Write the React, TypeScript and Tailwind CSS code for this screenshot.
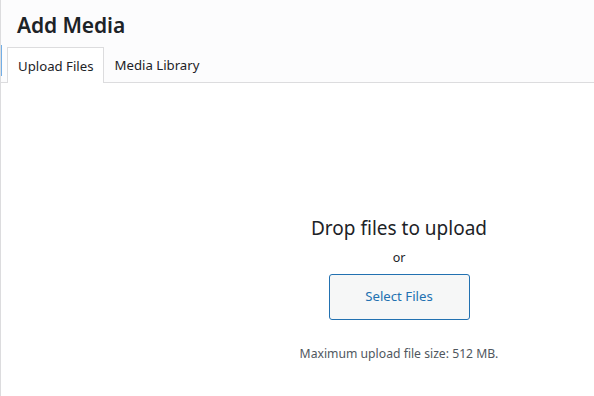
export default function App() {
  return (
    <div
      className="relative w-[594px] h-[396px] overflow-hidden bg-white border-l border-[#dcdcde] text-[#1d2327]"
      style={{ fontFamily: '"Noto Sans", "Open Sans", sans-serif' }}
    >
      <div className="absolute left-[-1px] top-[45px] h-[31px] w-[2px] bg-[#72aee6]" />

      <div className="bg-[#fcfcfd] border-b border-[#dcdcde]">
        <h1 className="px-4 h-[47px] leading-[50px] text-[21px] font-semibold tracking-[-0.1px]">Add Media</h1>
        <div className="flex px-[6px] h-[35px] text-[13.2px]">
          <button className="px-[10px] bg-white border border-b-0 border-[#dcdcde] -mb-px h-[36px] leading-[34px]">
            Upload Files
          </button>
          <button className="px-[10px] h-[35px] leading-[34px]">Media Library</button>
        </div>
      </div>

      <div className="pl-[203px] pt-[131px] flex flex-col items-center text-center">
        <h2 className="text-[19px] leading-[28px] font-normal">Drop files to upload</h2>
        <p className="mt-[6px] text-[12.5px] leading-[20px]">or</p>
        <button className="mt-[6px] h-[46px] w-[141px] rounded-[3px] border border-[#2271b1] bg-[#f6f7f7] text-[#2271b1] text-[13.2px]">
          Select Files
        </button>
        <p className="mt-[25px] text-[12.2px] leading-[18px] text-[#50575e]">
          Maximum upload file size: 512 MB.
        </p>
      </div>
    </div>
  );
}
